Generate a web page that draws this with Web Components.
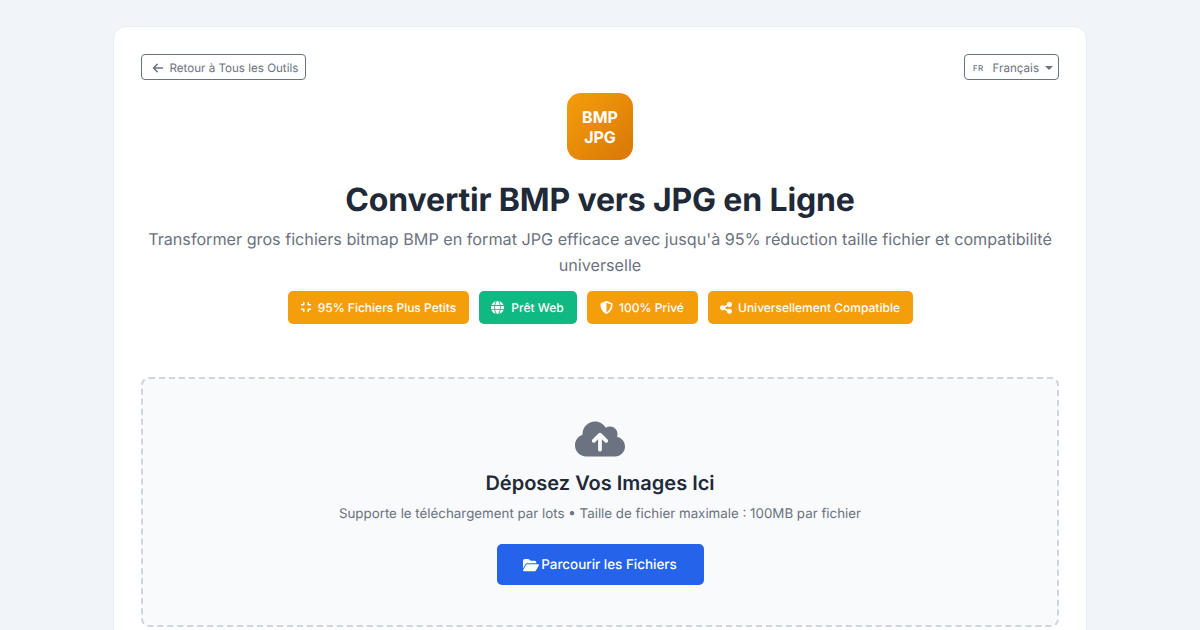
<!DOCTYPE html>
<html lang="fr"><head><meta charset="utf-8"><title>Convertir BMP vers JPG</title>
<style>html,body{margin:0;padding:0;height:630px;overflow:hidden;background:#f1f5f9;font-family:Inter,sans-serif;text-rendering:geometricPrecision}</style></head>
<body>
<template id="t-card"><style>
:host{display:block;box-sizing:border-box;width:972px;margin:27px auto 0;background:#fff;box-shadow:0 0 0 1px #e8edf3;border-radius:12px;padding:27px 27px 0;height:700px}
</style><slot></slot></template>
<template id="t-top"><style>
:host{display:flex;justify-content:space-between;align-items:center}
a{display:inline-flex;align-items:center;box-sizing:border-box;height:26px;padding-top:1px;border:1px solid #6b7280;border-radius:4px;color:#6b7280;font-size:11.6px;background:#fff}
svg{display:block}
.l{gap:5.500px;padding-left:10px;padding-right:6.500px}.r{padding-left:8px;padding-right:5px}
small{font-size:8px;font-weight:500;margin-right:9px;letter-spacing:.3px}
i{display:block;width:0;height:0;border:4px solid transparent;border-top-color:#6b7280;border-bottom:0;margin-left:6px}
</style>
<a class="l"><svg width="12" height="12" viewBox="0 0 448 512" fill="#6b7280"><path d="M9.4 233.4a32 32 0 0 0 0 45.3l160 160a32 32 0 0 0 45.3-45.3L109.3 288H416a32 32 0 0 0 0-64H109.3l105.3-105.4a32 32 0 0 0-45.3-45.3z"/></svg>Retour à Tous les Outils</a>
<a class="r"><small>FR</small>Français<i></i></a></template>
<template id="t-head"><style>
:host{display:block;text-align:center}
.logo{box-sizing:border-box;width:66.6px;height:66.6px;margin:13.4px auto 0;border-radius:14px;background:linear-gradient(135deg,#f59e0b,#d97706);color:#fff;font-weight:700;font-size:16px;line-height:20px;display:flex;align-items:center;justify-content:center}
h1{margin:21.500px 0 0;font-size:32px;line-height:38px;font-weight:700;color:#1f2937;letter-spacing:-.15px}
p{margin:7px 0 0;font-size:16.18px;line-height:26px;color:#6b7280}
</style><div class="logo">BMP<br>JPG</div><h1>Convertir BMP vers JPG en Ligne</h1><p>Transformer gros fichiers bitmap BMP en format JPG efficace avec jusqu'à 95% réduction taille fichier et compatibilité universelle</p><slot></slot></template>
<template id="t-badges"><style>:host{display:flex;justify-content:center;gap:10px;margin-top:12.500px}</style><slot></slot></template>
<template id="t-badge"><style>
:host{display:inline-flex;box-sizing:border-box;align-items:center;justify-content:center;gap:6px;height:33px;border-radius:5px;background:#f59e0b;color:#fff;font-size:12px;font-weight:500}
:host([green]){background:#10b981;gap:7px}
svg{display:block;fill:#fff}
</style><slot name="i"></slot><slot></slot></template>
<template id="t-drop"><style>
:host{display:block;box-sizing:border-box;height:250px;margin-top:53px;border:2px dashed #d1d5db;border-radius:8px;background:#f8fafc;text-align:center;padding-top:40px}
svg{display:block;margin:0 auto}
h3{margin:11px 0 0;font-size:20px;line-height:26px;font-weight:600;color:#1f2937}
p{margin:8px 0 0;font-size:13.34px;line-height:20px;color:#6b7280}
button{display:inline-flex;align-items:center;justify-content:center;gap:2px;width:207px;height:40.500px;margin-top:20.500px;padding:0;border:0;border-radius:5px;background:#2563eb;color:#fff;font:500 13.45px Inter,sans-serif;text-rendering:geometricPrecision}
</style>
<svg width="50" height="40" viewBox="0 0 640 512" fill="#6b7280"><path d="M144 480C64.500 480 0 415.500 0 336c0-62.800 40.200-116.200 96.200-135.900c-.1-2.700-.2-5.400-.2-8.100c0-88.400 71.600-160 160-160c59.300 0 111 32.200 138.700 80.200C409.900 102 428.300 96 448 96c53 0 96 43 96 96c0 12.200-2.300 23.800-6.400 34.600C596 238.400 640 290.100 640 352c0 70.700-57.300 128-128 128H144zm79-217c-9.400 9.400-9.400 24.600 0 33.900s24.600 9.400 33.900 0l39-39V392c0 13.300 10.700 24 24 24s24-10.700 24-24V257.900l39 39c9.400 9.400 24.600 9.400 33.900 0s9.400-24.600 0-33.900l-80-80c-9.400-9.400-24.600-9.400-33.900 0l-80 80z"/></svg>
<h3>Déposez Vos Images Ici</h3><p>Supporte le téléchargement par lots • Taille de fichier maximale : 100MB par fichier</p>
<button><svg width="16" height="14.2" viewBox="0 0 576 512" fill="#fff" style="margin:0"><path d="M88.700 223.800L0 375.800V96C0 60.700 28.700 32 64 32H181.500c17 0 33.300 6.700 45.300 18.700l26.500 26.500c12 12 28.300 18.700 45.300 18.700H416c35.300 0 64 28.700 64 64v32H144c-22.800 0-43.800 12.100-55.300 31.800zm27.600 16.100C122.100 230 132.600 224 144 224H544c11.500 0 22 6.100 27.700 16.100s5.700 22.200-.1 32.100l-112 192C453.900 474 443.400 480 432 480H32c-11.500 0-22-6.100-27.700-16.100s-5.700-22.200 .1-32.100l112-192z"/></svg>Parcourir les Fichiers</button></template>
<x-card>
<x-top></x-top>
<x-head>
<x-badges>
<x-badge style="width:181px"><svg slot="i" width="12" height="12" viewBox="0 0 448 512" fill="#fff"><path d="M160 64c0-17.700-14.300-32-32-32s-32 14.300-32 32v64H32c-17.700 0-32 14.300-32 32s14.300 32 32 32h96c17.700 0 32-14.300 32-32V64zM32 320c-17.700 0-32 14.300-32 32s14.300 32 32 32H96v64c0 17.700 14.300 32 32 32s32-14.300 32-32V352c0-17.700-14.300-32-32-32H32zM352 64c0-17.700-14.300-32-32-32s-32 14.300-32 32v96c0 17.700 14.300 32 32 32h96c17.700 0 32-14.300 32-32s-14.300-32-32-32H352V64zM320 320c-17.700 0-32 14.300-32 32v96c0 17.700 14.300 32 32 32s32-14.300 32-32V384h64c17.700 0 32-14.300 32-32s-14.300-32-32-32H320z"/></svg>95% Fichiers Plus Petits</x-badge>
<x-badge green style="width:98px"><svg slot="i" width="13" height="13" viewBox="0 0 512 512" fill="#fff"><path d="M352 256c0 22.200-1.200 43.600-3.300 64H163.300c-2.200-20.400-3.300-41.800-3.300-64s1.200-43.600 3.300-64H348.700c2.200 20.400 3.300 41.800 3.300 64zm28.800-64H503.900c5.300 20.500 8.100 41.900 8.100 64s-2.800 43.500-8.100 64H380.800c2.100-20.600 3.200-42 3.200-64s-1.100-43.400-3.200-64zm112.600-32H376.700c-10-63.900-29.800-117.400-55.300-151.600c78.300 20.700 142 77.500 171.900 151.600zm-149.100 0H167.700c6.100-36.400 15.500-68.600 27-94.700c10.500-23.600 22.200-40.700 33.500-51.500C239.400 3.200 248.700 0 256 0s16.600 3.200 27.800 13.800c11.300 10.800 23 27.900 33.500 51.500c11.600 26 20.900 58.200 27 94.700zm-209 0H18.600C48.600 85.900 112.200 29.100 190.600 8.400C165.100 42.600 145.300 96.100 135.300 160zM8.100 192H131.200c-2.100 20.600-3.200 42-3.200 64s1.100 43.400 3.200 64H8.100C2.800 299.500 0 278.100 0 256s2.800-43.500 8.100-64zM194.700 446.600c-11.600-26-20.900-58.200-27-94.600H344.300c-6.100 36.400-15.500 68.600-27 94.600c-10.500 23.600-22.200 40.700-33.500 51.500C272.600 508.800 263.300 512 256 512s-16.600-3.200-27.800-13.800c-11.300-10.800-23-27.900-33.500-51.500zM135.300 352c10 63.900 29.800 117.400 55.300 151.600C112.200 482.900 48.600 426.100 18.600 352H135.300zm358.100 0c-30 74.100-93.600 130.900-171.900 151.600c25.500-34.200 45.200-87.700 55.300-151.600H493.400z"/></svg>Prêt Web</x-badge>
<x-badge style="width:111px"><svg slot="i" width="13" height="13" viewBox="0 0 512 512" fill="#fff"><path d="M256 0c4.600 0 9.200 1 13.400 2.900L457.700 82.800c22 9.300 38.400 31 38.300 57.200c-.5 99.200-41.300 280.700-213.600 363.200c-16.700 8-36.100 8-52.800 0C57.300 420.700 16.500 239.200 16 140c-.1-26.200 16.300-47.900 38.300-57.200L242.700 2.900C246.800 1 251.400 0 256 0zm0 66.800V444.800C394 378 431.100 230.100 432 141.400L256 66.800l0 0z"/></svg>100% Privé</x-badge>
<x-badge style="width:205px"><svg slot="i" width="12" height="13.700" viewBox="0 0 448 512" fill="#fff"><path d="M352 224c53 0 96-43 96-96s-43-96-96-96s-96 43-96 96c0 4 .2 8 .7 11.900l-94.100 47C145.400 170.200 121.900 160 96 160c-53 0-96 43-96 96s43 96 96 96c25.900 0 49.400-10.200 66.600-26.900l94.100 47c-.5 3.900-.7 7.800-.7 11.900c0 53 43 96 96 96s96-43 96-96s-43-96-96-96c-25.900 0-49.400 10.200-66.600 26.900l-94.100-47c.5-3.900 .7-7.800 .7-11.900s-.2-8-.7-11.900l94.100-47C302.600 213.800 326.100 224 352 224z"/></svg>Universellement Compatible</x-badge>
</x-badges>
</x-head>
<x-drop></x-drop>
</x-card>
<script>
for (const [n,t] of [['x-card','t-card'],['x-top','t-top'],['x-head','t-head'],['x-badges','t-badges'],['x-badge','t-badge'],['x-drop','t-drop']]) {
  customElements.define(n, class extends HTMLElement {
    constructor(){super();this.attachShadow({mode:'open'}).appendChild(document.getElementById(t).content.cloneNode(true));}
  });
}
</script>
</body></html>
